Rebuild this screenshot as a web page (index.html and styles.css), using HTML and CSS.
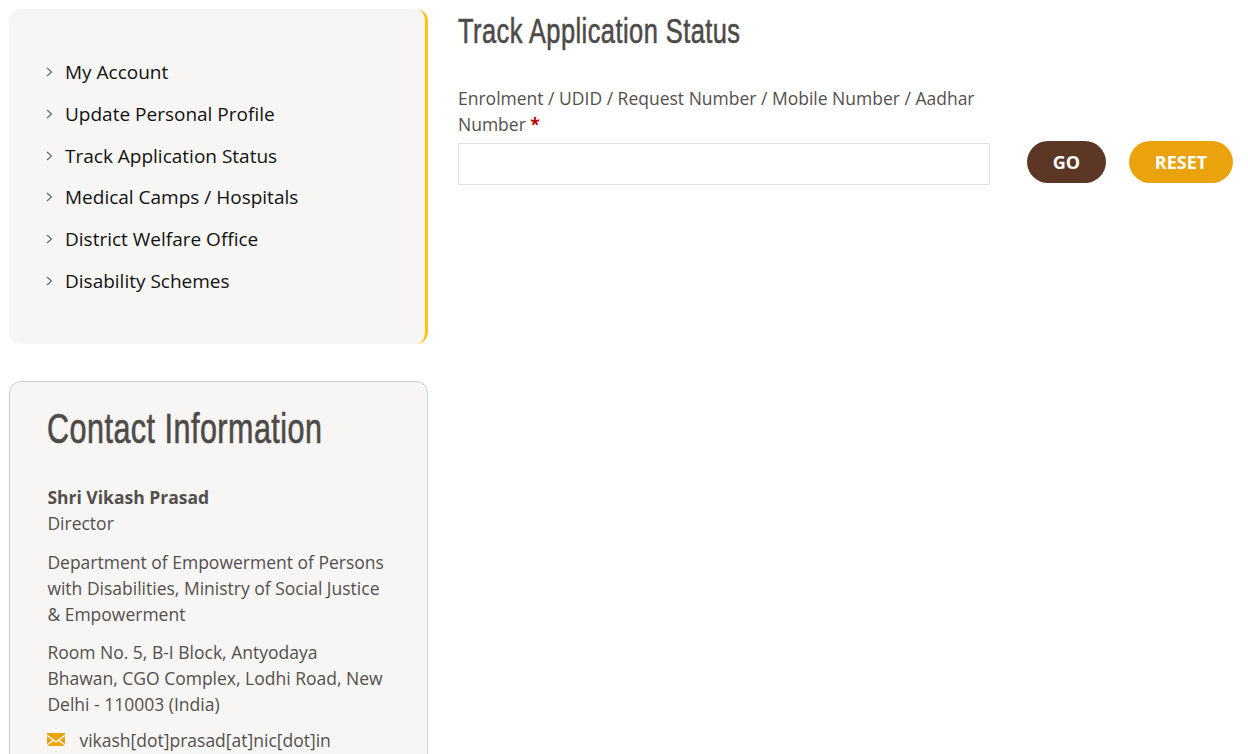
FILE: index.html
```html
<!DOCTYPE html>
<html lang="en">
<head>
<meta charset="utf-8">
<title>Track Application Status</title>
<link rel="stylesheet" href="styles.css">
</head>
<body>
<div class="page">
  <aside class="sidebar">
    <nav class="menu-card">
      <ul class="menu">
        <li><svg class="chev" viewBox="0 0 7 10"><path d="M1 1l4.500 4-4.500 4"/></svg><a href="#">My Account</a></li>
        <li><svg class="chev" viewBox="0 0 7 10"><path d="M1 1l4.500 4-4.500 4"/></svg><a href="#">Update Personal Profile</a></li>
        <li><svg class="chev" viewBox="0 0 7 10"><path d="M1 1l4.500 4-4.500 4"/></svg><a href="#">Track Application Status</a></li>
        <li><svg class="chev" viewBox="0 0 7 10"><path d="M1 1l4.500 4-4.500 4"/></svg><a href="#">Medical Camps / Hospitals</a></li>
        <li><svg class="chev" viewBox="0 0 7 10"><path d="M1 1l4.500 4-4.500 4"/></svg><a href="#">District Welfare Office</a></li>
        <li><svg class="chev" viewBox="0 0 7 10"><path d="M1 1l4.500 4-4.500 4"/></svg><a href="#">Disability Schemes</a></li>
      </ul>
    </nav>
    <section class="contact-card">
      <h2 class="contact-title">Contact Information</h2>
      <p class="contact-p"><strong>Shri Vikash Prasad</strong><br>Director</p>
      <p class="contact-p">Department of Empowerment of Persons with Disabilities, Ministry of Social Justice &amp; Empowerment</p>
      <p class="contact-p">Room No. 5, B-I Block, Antyodaya Bhawan, CGO Complex, Lodhi Road, New Delhi - 110003 (India)</p>
      <p class="contact-mail"><svg class="mail" viewBox="0 0 18 13"><path d="M0 0h18v1.500L9 8 0 1.500z"/><path d="M0 3.200L5.300 7 0 11.500zM18 3.200L12.700 7 18 11.500zM6.500 7.900L9 9.700l2.500-1.800L18 13H0z"/></svg>vikash[dot]prasad[at]nic[dot]in</p>
    </section>
  </aside>
  <main class="main">
    <h1 class="title">Track Application Status</h1>
    <form class="form">
      <div class="field">
        <label class="label" for="q">Enrolment / UDID / Request Number / Mobile Number / Aadhar Number <span class="req">*</span></label>
        <input class="input" id="q" type="text">
      </div>
      <button class="btn btn-go" type="button">GO</button>
      <button class="btn btn-reset" type="button">RESET</button>
    </form>
  </main>
</div>
</body>
</html>
```
FILE: styles.css
```css
html, body { margin: 0; padding: 0; height: 754px; overflow: hidden; background: #fff; }
body { font-family: "Open Sans", sans-serif; color: #534f4d; font-size: 17.5px; line-height: 26px; }
.page { display: flex; align-items: flex-start; padding: 9px 15px 0 9px; gap: 30px; }
.sidebar { width: 419px; flex: none; display: flex; flex-direction: column; gap: 37px; }
.menu-card { height: 335px; box-sizing: border-box; background: #f7f6f5; border-right: 3px solid #fdc318; border-radius: 12px; padding: 42.2px 0 0 37px; }
.menu { list-style: none; margin: 0; padding: 0; }
.menu li { display: flex; align-items: center; height: 41.8px; }
.menu a { color: #111; text-decoration: none; font-size: 19px; }
.chev { width: 7px; height: 10px; margin-right: 12px; fill: none; stroke: #5f6b78; stroke-width: 1.200; }
.contact-card { box-sizing: border-box; height: 500px; background: #f7f6f5; border: 1px solid #ccc; border-radius: 12px; padding: 20px 37px 0 37.4px; }
.contact-title { margin: -1px 0 29px; font-family: "Liberation Sans", sans-serif; font-weight: 400; font-size: 43px; line-height: 54px; letter-spacing: 0.7px; color: #4d4a48; white-space: nowrap; transform: scaleX(0.709); transform-origin: left center; -webkit-text-stroke: 0.7px #4d4a48; }
.contact-p { margin: 0 0 12.5px; }
.contact-mail { margin: -3px 0 0; display: flex; align-items: center; }
.mail { width: 18px; height: 13px; margin-right: 14px; fill: #eaa30d; flex: none; }
.main { flex: 1; min-width: 0; }
.title { margin: 0 0 32px; font-family: "Liberation Sans", sans-serif; font-weight: 400; font-size: 35px; line-height: 44px; letter-spacing: 0.6px; color: #4d4a48; white-space: nowrap; transform: scaleX(0.727); transform-origin: left center; -webkit-text-stroke: 0.6px #4d4a48; }
.form { display: flex; align-items: flex-end; }
.field { width: 532px; flex: none; margin-right: 37px; }
.label { display: block; }
.req { color: #b60000; font-weight: 700; }
.input { display: block; box-sizing: border-box; width: 100%; height: 42px; margin-top: 6px; background: #fff; border: 1px solid #e0e0e0; }
.btn { height: 42px; border: 0; border-radius: 21px; color: #fff; font-family: "Open Sans", sans-serif; font-weight: 700; font-size: 18px; padding: 0; margin-bottom: 2px; }
.btn-go { width: 79px; background: #5c3726; margin-right: 23px; }
.btn-reset { width: 104px; background: #eaa30d; }
```
